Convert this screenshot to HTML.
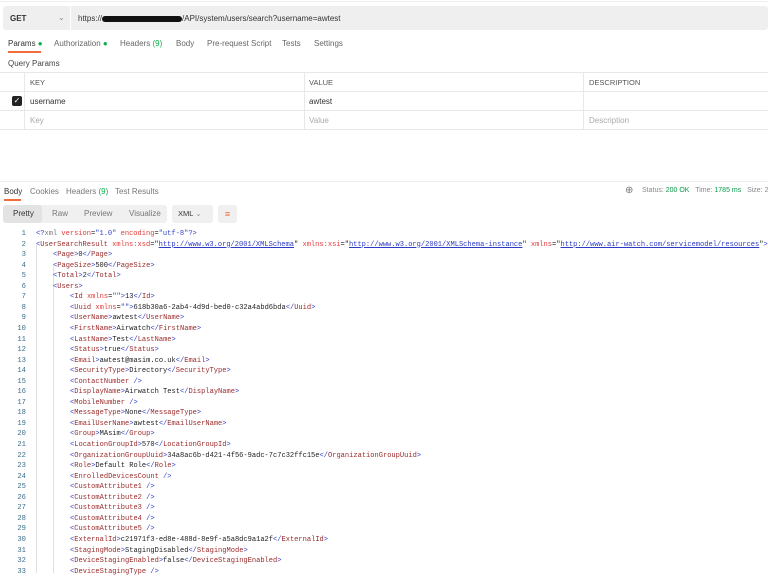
<!DOCTYPE html>
<html><head><meta charset="utf-8"><style>
*{margin:0;padding:0;box-sizing:border-box}
body{width:768px;height:573px;overflow:hidden;background:#fff;font-family:"Liberation Sans",sans-serif;font-size:8px;color:#333;position:relative}
.a{position:absolute;white-space:nowrap}
.code{font-family:"Liberation Mono",monospace;font-size:7.05px;color:#222}
.ln{position:absolute;left:0;width:26px;text-align:right;color:#3b6e8a;font-family:"Liberation Mono",monospace;font-size:7.2px}
.b{color:#3344cc}.t{color:#9b2b2b}.r{color:#e23a3a}.v{color:#2b3bc4;text-decoration:underline}
</style></head><body>
<div class="a" style="left:0;top:1px;width:768px;height:1px;background:#eee"></div>
<div class="a" style="left:3px;top:6px;width:765px;height:24px;background:#efefef;border-radius:3px"></div>
<div class="a" style="left:70px;top:6px;width:1px;height:24px;background:#fff"></div>
<div class="a" style="left:10px;top:14px;font-weight:bold;color:#333;font-size:8px">GET</div>
<div class="a" style="left:58px;top:13px;color:#888;font-size:8px">⌄</div>
<div class="a" style="left:78px;top:14px;color:#333">https://<span style="display:inline-block;width:80px;height:6px;background:#111;border-radius:3px;vertical-align:middle"></span>/API/system/users/search?username=awtest</div>
<div class="a" style="left:8px;top:39px;color:#333">Params <span style="color:#0cb04b">●</span></div>
<div class="a" style="left:8px;top:51px;width:33px;height:2px;background:#f26b3a"></div>
<div class="a" style="left:54px;top:39px;color:#666">Authorization <span style="color:#0cb04b">●</span></div>
<div class="a" style="left:120px;top:39px;color:#666">Headers <span style="color:#0cb04b">(9)</span></div>
<div class="a" style="left:176px;top:39px;color:#666">Body</div>
<div class="a" style="left:207px;top:39px;color:#666">Pre-request Script</div>
<div class="a" style="left:282px;top:39px;color:#666">Tests</div>
<div class="a" style="left:314px;top:39px;color:#666">Settings</div>
<div class="a" style="left:8px;top:59px;color:#444">Query Params</div>
<div class="a" style="left:0;top:72px;width:768px;height:1px;background:#e8e8e8"></div>
<div class="a" style="left:0;top:91px;width:768px;height:1px;background:#e8e8e8"></div>
<div class="a" style="left:0;top:110px;width:768px;height:1px;background:#e8e8e8"></div>
<div class="a" style="left:0;top:129px;width:768px;height:1px;background:#e8e8e8"></div>
<div class="a" style="left:24px;top:72px;width:1px;height:57px;background:#e8e8e8"></div>
<div class="a" style="left:304px;top:72px;width:1px;height:57px;background:#e8e8e8"></div>
<div class="a" style="left:583px;top:72px;width:1px;height:57px;background:#e8e8e8"></div>
<div class="a" style="left:30px;top:78px;color:#555;font-size:7.5px">KEY</div>
<div class="a" style="left:309px;top:78px;color:#555;font-size:7.5px">VALUE</div>
<div class="a" style="left:589px;top:78px;color:#555;font-size:7.5px">DESCRIPTION</div>
<div class="a" style="left:12px;top:96px;width:10px;height:10px;background:#222;border-radius:2px;color:#fff;font-size:8px;line-height:10px;text-align:center">✓</div>
<div class="a" style="left:30px;top:97px;color:#333">username</div>
<div class="a" style="left:309px;top:97px;color:#333">awtest</div>
<div class="a" style="left:30px;top:116px;color:#aaa">Key</div>
<div class="a" style="left:309px;top:116px;color:#aaa">Value</div>
<div class="a" style="left:589px;top:116px;color:#aaa">Description</div>
<div class="a" style="left:0;top:181px;width:768px;height:1px;background:#eee"></div>
<div class="a" style="left:4px;top:187px;color:#333">Body</div>
<div class="a" style="left:4px;top:199px;width:17px;height:2px;background:#f26b3a"></div>
<div class="a" style="left:30px;top:187px;color:#777">Cookies</div>
<div class="a" style="left:66px;top:187px;color:#777">Headers <span style="color:#0cb04b">(9)</span></div>
<div class="a" style="left:115px;top:187px;color:#777">Test Results</div>
<div class="a" style="left:625px;top:185px;color:#777;font-size:10px">⊕</div>
<div class="a" style="left:642px;top:187px;color:#888;font-size:7px">Status: <span style="color:#0a9a48">200 OK</span> &nbsp; Time: <span style="color:#0a9a48">1785 ms</span> &nbsp; Size: 2</div>
<div class="a" style="left:3px;top:205px;width:164px;height:18px;background:#f0f0f0;border-radius:3px"></div>
<div class="a" style="left:3px;top:205px;width:39px;height:18px;background:#e3e3e3;border-radius:3px"></div>
<div class="a" style="left:13px;top:209px;color:#333">Pretty</div>
<div class="a" style="left:52px;top:209px;color:#777">Raw</div>
<div class="a" style="left:84px;top:209px;color:#777">Preview</div>
<div class="a" style="left:129px;top:209px;color:#777">Visualize</div>
<div class="a" style="left:172px;top:205px;width:41px;height:18px;background:#f0f0f0;border-radius:3px"></div>
<div class="a" style="left:178px;top:209px;color:#333;font-size:7.5px">XML <span style="color:#888">⌄</span></div>
<div class="a" style="left:218px;top:205px;width:19px;height:18px;background:#f0f0f0;border-radius:3px;color:#f26b3a;font-size:9px;text-align:center;line-height:18px">≡</div>
<div class="a" style="left:36px;top:245px;width:1px;height:328px;background:#e0e0e0"></div>
<div class="a" style="left:53px;top:266px;width:1px;height:307px;background:#e0e0e0"></div>
<div id="c"></div>
<script>
const L=[
[0,'<span class="b">&lt;?</span><span style="color:#777">xml</span> <span class="r">version</span>=<span class="b">"1.0"</span> <span class="r">encoding</span>=<span class="b">"utf-8"</span><span class="b">?&gt;</span>'],
[0,'<span class="b">&lt;</span><span class="t">UserSearchResult</span> <span class="r">xmlns:xsd</span>="<span class="v">http://www.w3.org/2001/XMLSchema</span>" <span class="r">xmlns:xsi</span>="<span class="v">http://www.w3.org/2001/XMLSchema-instance</span>" <span class="r">xmlns</span>="<span class="v">http://www.air-watch.com/servicemodel/resources</span>"<span class="b">&gt;</span>'],
[1,'Page','0'],[1,'PageSize','500'],[1,'Total','2'],[1,'<span class="b">&lt;</span><span class="t">Users</span><span class="b">&gt;</span>'],
[2,'<span class="b">&lt;</span><span class="t">Id</span> <span class="r">xmlns</span>=<span class="b">""</span><span class="b">&gt;</span>13<span class="b">&lt;/</span><span class="t">Id</span><span class="b">&gt;</span>'],
[2,'<span class="b">&lt;</span><span class="t">Uuid</span> <span class="r">xmlns</span>=<span class="b">""</span><span class="b">&gt;</span>618b30a6-2ab4-4d9d-bed0-c32a4abd6bda<span class="b">&lt;/</span><span class="t">Uuid</span><span class="b">&gt;</span>'],
[2,'UserName','awtest'],[2,'FirstName','Airwatch'],[2,'LastName','Test'],[2,'Status','true'],[2,'Email','awtest@masim.co.uk'],[2,'SecurityType','Directory'],[2,'ContactNumber'],[2,'DisplayName','Airwatch Test'],[2,'MobileNumber'],[2,'MessageType','None'],[2,'EmailUserName','awtest'],[2,'Group','MAsim'],[2,'LocationGroupId','570'],[2,'OrganizationGroupUuid','34a8ac6b-d421-4f56-9adc-7c7c32ffc15e'],[2,'Role','Default Role'],[2,'EnrolledDevicesCount'],[2,'CustomAttribute1'],[2,'CustomAttribute2'],[2,'CustomAttribute3'],[2,'CustomAttribute4'],[2,'CustomAttribute5'],[2,'ExternalId','c21971f3-ed8e-488d-8e9f-a5a8dc9a1a2f'],[2,'StagingMode','StagingDisabled'],[2,'DeviceStagingEnabled','false'],[2,'DeviceStagingType']
];
let h='';
L.forEach((l,i)=>{const y=230+i*10.55;let s;
if(l.length==3)s=`<span class="b">&lt;</span><span class="t">${l[1]}</span><span class="b">&gt;</span>${l[2]}<span class="b">&lt;/</span><span class="t">${l[1]}</span><span class="b">&gt;</span>`;
else if(/^[A-Za-z0-9]+$/.test(l[1]))s=`<span class="b">&lt;</span><span class="t">${l[1]}</span> <span class="b">/&gt;</span>`;
else s=l[1];
h+=`<div class="ln" style="top:${y}px">${i+1}</div><div class="a code" style="left:${36+l[0]*17}px;top:${y}px">${s}</div>`;});
document.getElementById('c').innerHTML=h;
</script>
</body></html>
